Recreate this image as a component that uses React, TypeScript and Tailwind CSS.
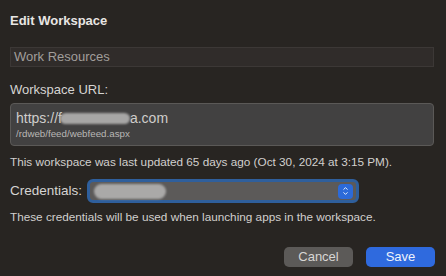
import { ChevronUp, ChevronDown } from "lucide-react";

export default function App() {
  return (
    <div
      className="w-[446px] h-[276px] overflow-hidden bg-[#282522] px-[10px] pt-[12px] text-[#dcdad8]"
      style={{ fontFamily: '"Liberation Sans", Arial, sans-serif' }}
    >
      <h1 className="text-[13px] font-bold leading-[18px] text-[#e8e6e4]">Edit Workspace</h1>

      <div className="mt-[17px] h-[20px] w-[424px] border border-[#3c3836] bg-[#302c2a] px-[3px] text-[13px] leading-[18px] text-[#a19e9b]">
        Work Resources
      </div>

      <div className="mt-[14px] text-[13px] leading-[18px] text-[#d6d4d2]">Workspace URL:</div>

      <div className="mt-[4px] h-[43px] w-[424px] rounded-[4px] border border-[#5b5957] bg-[#424141] px-[5px] pt-[5px]">
        <div className="flex items-center text-[14px] leading-[18px] text-[#cfcdcb]">
          <span>https://f</span>
          <span className="ml-[-2px] h-[11px] w-[70px] rounded-full bg-[#a7a6a5] blur-[1px]" />
          <span>a.com</span>
        </div>
        <div className="mt-[1px] text-[9.75px] leading-[12px] text-[#b9b7b5]">/rdweb/feed/webfeed.aspx</div>
      </div>

      <p className="mt-[9px] text-[11.75px] leading-[14px] text-[#d2d0ce]">
        This workspace was last updated 65 days ago (Oct 30, 2024 at 3:15 PM).
      </p>

      <div className="mt-[10px] flex items-center gap-[5px]">
        <span className="text-[13.5px] leading-[18px] text-[#d6d4d2]">Credentials:</span>
        <div className="flex h-[24px] w-[272px] items-center rounded-[6px] border-[3px] border-[#2f5f9c] bg-[#5c5a59] pl-[4px] pr-[3px]">
          <span className="h-[15px] w-[72px] rounded-full bg-[#aaa9a8] blur-[1px]" />
          <span className="ml-auto flex h-[15px] w-[15px] flex-col items-center justify-center rounded-[4px] bg-[#2c6ad8] text-white">
            <ChevronUp className="h-[7px] w-[9px] -mb-[1px]" strokeWidth={3} />
            <ChevronDown className="h-[7px] w-[9px] -mt-[1px]" strokeWidth={3} />
          </span>
        </div>
      </div>

      <p className="mt-[7px] text-[11.75px] leading-[14px] text-[#d2d0ce]">
        These credentials will be used when launching apps in the workspace.
      </p>

      <div className="mt-[23px] flex justify-end gap-[13px] pr-[1px]">
        <button className="h-[20px] w-[69px] rounded-[5px] bg-[#5c5a58] text-[13px] leading-[20px] text-[#d8d6d4]">
          Cancel
        </button>
        <button className="h-[20px] w-[69px] rounded-[5px] bg-[#2f6ade] text-[13px] leading-[20px] text-[#eef2fb]">
          Save
        </button>
      </div>
    </div>
  );
}
